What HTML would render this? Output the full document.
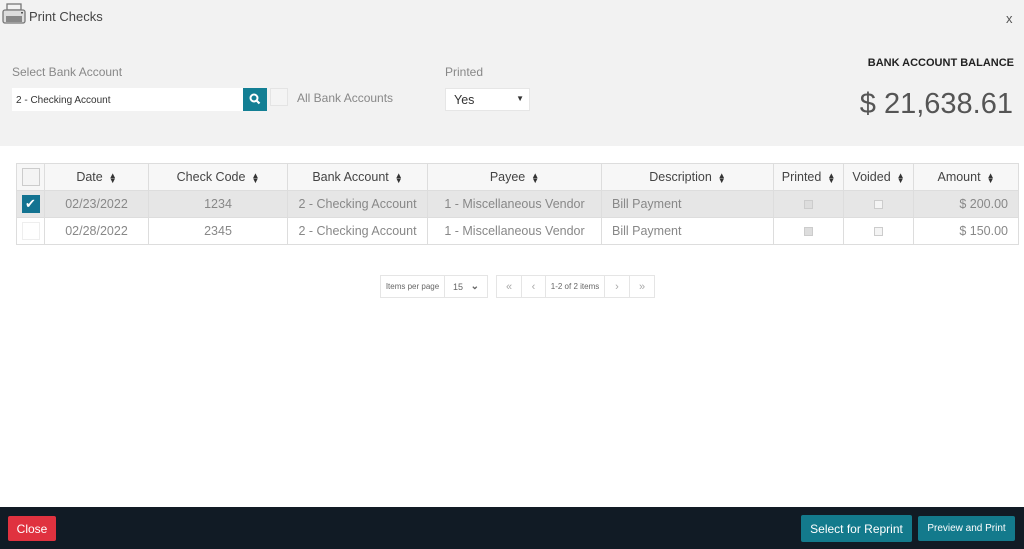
<!DOCTYPE html>
<html><head><style>
*{box-sizing:border-box;margin:0;padding:0}
body{width:1024px;height:549px;font-family:"Liberation Sans",sans-serif;background:#fff;position:relative;overflow:hidden;color:#555}
.top{position:absolute;left:0;top:0;width:1024px;height:146px;background:#f2f2f2}
.abs{position:absolute}
table{position:absolute;left:16px;top:163px;width:1002px;table-layout:fixed;border-collapse:collapse;font-size:12.5px}
td,th{border:1px solid #ddd;height:27px;font-weight:normal;color:#888;white-space:nowrap;overflow:hidden}
th{color:#444;background:#f7f7f7}
tr.sel td{background:#e6e6e6}
.sort{font-size:8px;margin-left:6px;color:#333;display:inline-block;line-height:5px;vertical-align:middle;text-align:center}
.cb{width:13px;height:13px;border:1px solid #ccc;display:inline-block;background:#f4f4f4;vertical-align:middle}
.foot{position:absolute;left:0;top:507px;width:1024px;height:42px;background:#111b25}
.btn{position:absolute;color:#fff;font-size:12px;display:flex;align-items:center;justify-content:center;border-radius:2px}
.pg{position:absolute;top:275px;height:23px;border:1px solid #e5e5e5;font-size:8px;color:#666;display:flex;align-items:center;justify-content:center;background:#fff}
</style></head><body>
<div class="top"></div>
<svg class="abs" style="left:2px;top:3px" width="25" height="22" viewBox="0 0 25 22"><rect x="5" y="1" width="14" height="6" fill="none" stroke="#777" stroke-width="1.3"/><rect x="1" y="7" width="22" height="13" rx="2" fill="#ddd" stroke="#777" stroke-width="1.3"/><rect x="4" y="13" width="16" height="6" fill="#888"/><rect x="19" y="9" width="2" height="1.5" fill="#555"/></svg>
<div class="abs" style="left:29px;top:9px;font-size:13px;color:#444">Print Checks</div>
<div class="abs" style="left:1006px;top:11px;font-size:13px;color:#555">x</div>
<div class="abs" style="left:12px;top:65px;font-size:12px;color:#888">Select Bank Account</div>
<div class="abs" style="left:12px;top:88px;width:232px;height:23px;background:#fff;font-size:10px;color:#333;padding:7px 4px">2 - Checking Account</div>
<div class="abs" style="left:243px;top:88px;width:24px;height:23px;background:#137f94"></div>
<svg class="abs" style="left:249px;top:93px" width="12" height="12" viewBox="0 0 12 12"><circle cx="5" cy="5" r="3.5" fill="none" stroke="#fff" stroke-width="2"/><path d="M7.5 7.5L10.5 10.5" stroke="#fff" stroke-width="2.2"/></svg>
<div class="abs" style="left:270px;top:88px;width:18px;height:18px;border:1px solid #e4e4e4;background:#f4f4f4"></div>
<div class="abs" style="left:297px;top:91px;font-size:12px;color:#888">All Bank Accounts</div>
<div class="abs" style="left:445px;top:65px;font-size:12px;color:#888">Printed</div>
<div class="abs" style="left:445px;top:88px;width:85px;height:23px;background:#fff;border:1px solid #e6e6e6;font-size:12.5px;color:#333;padding:4px 8px">Yes<span style="position:absolute;right:5px;top:5px;font-size:8px">▼</span></div>
<div class="abs" style="right:10px;top:57px;font-size:11px;font-weight:bold;color:#222">BANK ACCOUNT BALANCE</div>
<div class="abs" style="right:11px;top:88px;font-size:29px;color:#555">$ 21,638.61</div>
<table>
<colgroup><col style="width:28px"><col style="width:104px"><col style="width:139px"><col style="width:140px"><col style="width:174px"><col style="width:172px"><col style="width:70px"><col style="width:70px"><col style="width:105px"></colgroup>
<tr><th><span class="cb" style="width:18px;height:18px"></span></th><th>Date<span class="sort">▲<br>▼</span></th><th>Check Code<span class="sort">▲<br>▼</span></th><th>Bank Account<span class="sort">▲<br>▼</span></th><th>Payee<span class="sort">▲<br>▼</span></th><th>Description<span class="sort">▲<br>▼</span></th><th>Printed<span class="sort">▲<br>▼</span></th><th>Voided<span class="sort">▲<br>▼</span></th><th>Amount<span class="sort">▲<br>▼</span></th></tr>
<tr class="sel"><td style="text-align:center"><span style="display:inline-block;width:18px;height:18px;background:#137391;color:#fff;font-size:13px;line-height:18px">✔</span></td><td align="center">02/23/2022</td><td align="center">1234</td><td align="center">2 - Checking Account</td><td align="center">1 - Miscellaneous Vendor</td><td style="padding-left:10px">Bill Payment</td><td align="center"><span class="cb" style="width:9px;height:9px;background:#ddd"></span></td><td align="center"><span class="cb" style="width:9px;height:9px"></span></td><td align="right" style="padding-right:10px">$ 200.00</td></tr>
<tr><td style="text-align:center"><span class="cb" style="width:18px;height:18px;background:#fff;border-color:#eee"></span></td><td align="center">02/28/2022</td><td align="center">2345</td><td align="center">2 - Checking Account</td><td align="center">1 - Miscellaneous Vendor</td><td style="padding-left:10px">Bill Payment</td><td align="center"><span class="cb" style="width:9px;height:9px;background:#ddd"></span></td><td align="center"><span class="cb" style="width:9px;height:9px"></span></td><td align="right" style="padding-right:10px">$ 150.00</td></tr>
</table>
<div class="pg" style="left:380px;width:65px">Items per page</div>
<div class="pg" style="left:444px;width:44px;font-size:9px">15 &nbsp;&nbsp;<b style="font-size:10px">⌄</b></div>
<div class="pg" style="left:496px;width:26px;color:#aaa;font-size:11px">«</div>
<div class="pg" style="left:521px;width:25px;color:#aaa;font-size:11px">‹</div>
<div class="pg" style="left:545px;width:60px">1-2 of 2 items</div>
<div class="pg" style="left:604px;width:26px;color:#aaa;font-size:11px">›</div>
<div class="pg" style="left:629px;width:26px;color:#aaa;font-size:11px">»</div>
<div class="foot"></div>
<div class="btn" style="left:8px;top:516px;width:48px;height:25px;background:#e0323f">Close</div>
<div class="btn" style="left:801px;top:515px;width:111px;height:27px;background:#137a8c">Select for Reprint</div>
<div class="btn" style="left:918px;top:516px;width:97px;height:25px;background:#137a8c;font-size:10px">Preview and Print</div>
</body></html>
